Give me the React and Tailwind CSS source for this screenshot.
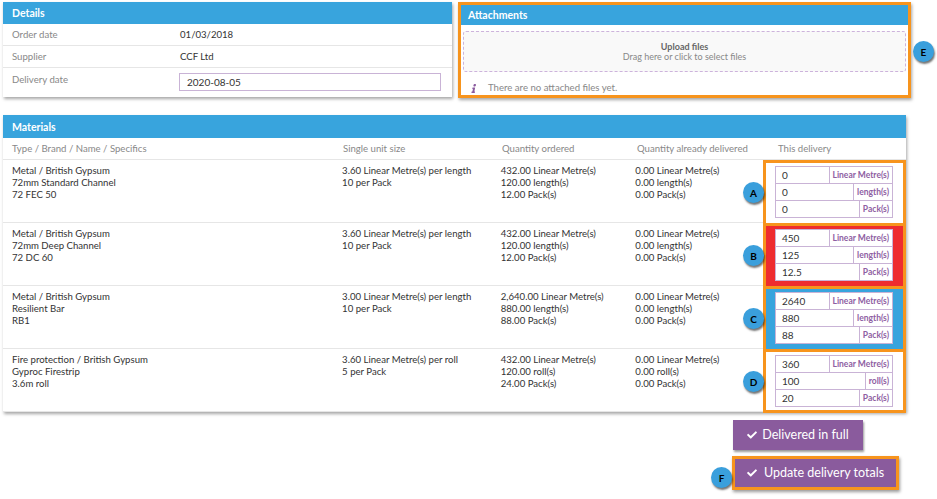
import React from 'react';
import { FaCheck, FaInfo } from 'react-icons/fa';

const FONT = 'font-["Lato","Open_Sans",sans-serif]';

const MATERIALS = [
  {
    name: ['Metal / British Gypsum', '72mm Standard Channel', '72 FEC 50'],
    size: ['3.60 Linear Metre(s) per length', '10 per Pack'],
    ordered: ['432.00 Linear Metre(s)', '120.00 length(s)', '12.00 Pack(s)'],
    delivered: ['0.00 Linear Metre(s)', '0.00 length(s)', '0.00 Pack(s)'],
    inputs: [['0', 'Linear Metre(s)'], ['0', 'length(s)'], ['0', 'Pack(s)']],
    badge: 'A',
    fill: 'bg-white',
  },
  {
    name: ['Metal / British Gypsum', '72mm Deep Channel', '72 DC 60'],
    size: ['3.60 Linear Metre(s) per length', '10 per Pack'],
    ordered: ['432.00 Linear Metre(s)', '120.00 length(s)', '12.00 Pack(s)'],
    delivered: ['0.00 Linear Metre(s)', '0.00 length(s)', '0.00 Pack(s)'],
    inputs: [['450', 'Linear Metre(s)'], ['125', 'length(s)'], ['12.5', 'Pack(s)']],
    badge: 'B',
    fill: 'bg-[#ee2c2f]',
  },
  {
    name: ['Metal / British Gypsum', 'Resilient Bar', 'RB1'],
    size: ['3.00 Linear Metre(s) per length', '10 per Pack'],
    ordered: ['2,640.00 Linear Metre(s)', '880.00 length(s)', '88.00 Pack(s)'],
    delivered: ['0.00 Linear Metre(s)', '0.00 length(s)', '0.00 Pack(s)'],
    inputs: [['2640', 'Linear Metre(s)'], ['880', 'length(s)'], ['88', 'Pack(s)']],
    badge: 'C',
    fill: 'bg-[#38a4dd]',
  },
  {
    name: ['Fire protection / British Gypsum', 'Gyproc Firestrip', '3.6m roll'],
    size: ['3.60 Linear Metre(s) per roll', '5 per Pack'],
    ordered: ['432.00 Linear Metre(s)', '120.00 roll(s)', '24.00 Pack(s)'],
    delivered: ['0.00 Linear Metre(s)', '0.00 roll(s)', '0.00 Pack(s)'],
    inputs: [['360', 'Linear Metre(s)'], ['100', 'roll(s)'], ['20', 'Pack(s)']],
    badge: 'D',
    fill: 'bg-white',
  },
];

function Badge({ letter, className }) {
  return (
    <div className={`absolute w-[21px] h-[21px] rounded-full bg-[#3a9fdc] shadow-[1px_2px_2px_rgba(0,0,0,0.55)] flex items-center justify-center text-[10px] font-bold text-black ${className}`}>
      {letter}
    </div>
  );
}

function Lines({ items }) {
  return (
    <div className="flex flex-col">
      {items.map((t, i) => (
        <div key={i} className="whitespace-nowrap">{t}</div>
      ))}
    </div>
  );
}

export default function App() {
  return (
    <div className={`${FONT} w-[937px] h-[499px] bg-white text-[#333] text-[9.6px] leading-[12px] overflow-hidden`}>
      <div className="flex items-start pt-[2px] pl-[3px]">
        {/* Details */}
        <div className="w-[449px] h-[95px] bg-white shadow-[1px_2px_3px_rgba(0,0,0,0.35)]">
          <div className="h-[22px] bg-[#38a4dd] px-[9px] flex items-center text-[10.5px] font-bold text-white">Details</div>
          <div className="h-[22px] flex items-center border-b border-[#e6e6e6] px-[9px] pt-[1px]">
            <div className="w-[168px] text-[#888]">Order date</div>
            <div>01/03/2018</div>
          </div>
          <div className="h-[22px] flex items-center border-b border-[#e6e6e6] px-[9px] pt-[1px]">
            <div className="w-[168px] text-[#888]">Supplier</div>
            <div>CCF Ltd</div>
          </div>
          <div className="flex items-start px-[9px] pt-[5px]">
            <div className="w-[167px] text-[#888] pt-[1px]">Delivery date</div>
            <div className="w-[262px] h-[18px] border border-[#c9b3d6] flex items-center px-[7px] text-[10px]">2020-08-05</div>
          </div>
        </div>

        {/* Attachments */}
        <div className="relative ml-[6px] w-[453px] h-[96px] border-[3px] border-[#f7941d] shadow-[1px_2px_3px_rgba(0,0,0,0.35)]">
          <div className="h-full bg-white">
            <div className="h-[20px] bg-[#38a4dd] px-[7px] flex items-center text-[10.5px] font-bold text-white">Attachments</div>
            <div className="mx-[2px] mt-[6px] h-[41px] border border-dashed border-[#cdb3dc] rounded-[3px] bg-[#f9f9f9] flex flex-col items-center justify-center text-[9px] leading-[10px]">
              <div className="font-bold text-[#666]">Upload files</div>
              <div className="text-[#888]">Drag here or click to select files</div>
            </div>
            <div className="flex items-center mt-[10px] pl-[9px] text-[#888]">
              <FaInfo className="w-[8px] h-[9px] text-[#8b5a9e] mr-[10px] -skew-x-12" />
              There are no attached files yet.
            </div>
          </div>
          <Badge letter="E" className="-right-[26px] top-[36px]" />
        </div>
      </div>

      {/* Materials */}
      <div className="ml-[3px] mt-[17px] w-[903px] bg-white shadow-[1px_2px_3px_rgba(0,0,0,0.35)]">
        <div className="h-[23px] bg-[#38a4dd] px-[9px] flex items-center text-[10.5px] font-bold text-white">Materials</div>
        <div className="flex h-[22px] items-center border-b border-[#e6e6e6] text-[#888]">
          <div className="w-[331px] pl-[9px]">Type / Brand / Name / Specifics</div>
          <div className="w-[159px] pl-[9px]">Single unit size</div>
          <div className="w-[135px] pl-[9px]">Quantity ordered</div>
          <div className="w-[137px] pl-[9px]">Quantity already delivered</div>
          <div className="pl-[13px]">This delivery</div>
        </div>
        {MATERIALS.map((m, idx) => (
          <div key={m.badge} className="flex h-[63px] border-b border-[#e6e6e6]">
            <div className="w-[331px] pl-[9px] pt-[5px]"><Lines items={m.name} /></div>
            <div className="w-[159px] pl-[9px] pt-[5px]"><Lines items={m.size} /></div>
            <div className="w-[135px] pl-[9px] pt-[5px]"><Lines items={m.ordered} /></div>
            <div className="w-[137px] pl-[9px] pt-[5px]"><Lines items={m.delivered} /></div>
            <div className={`relative shrink-0 w-[143px] h-[64px] border-x-[3px] border-t-[3px] border-[#f7941d] ${idx === MATERIALS.length - 1 ? 'border-b-[3px]' : '-mb-[1px]'} ${m.fill} pl-[9px] pr-[10px] pt-[3px]`}>
              {m.inputs.map(([val, unit], i) => (
                <div key={i} className={`flex h-[18px] bg-white border border-[#c9b3d6] ${i > 0 ? '-mt-[1px]' : ''}`}>
                  <div className="flex-1 flex items-center pl-[6px] text-[10px]">{val}</div>
                  <div className="flex items-center px-[3px] border-l border-[#c9b3d6] text-[8.5px] font-bold text-[#8e5ea2]">{unit}</div>
                </div>
              ))}
              <Badge letter={m.badge} className="-left-[23px] top-[19px]" />
            </div>
          </div>
        ))}
      </div>

      {/* Actions */}
      <div className="flex flex-col items-start ml-[733px] mt-[8px]">
        <button className="w-[130px] h-[30px] bg-[#8a5b9d] shadow-[1px_2px_2px_rgba(0,0,0,0.4)] text-white text-[12.5px] flex items-center justify-center gap-[5px]">
          <FaCheck className="w-[10px] h-[10px]" />
          Delivered in full
        </button>
        <div className="relative -ml-[1px] mt-[6px] border-[3px] border-[#f7941d] shadow-[1px_2px_3px_rgba(0,0,0,0.4)]">
          <button className="w-[161px] h-[28px] bg-[#8a5b9d] text-white text-[12.5px] flex items-center justify-center gap-[7px]">
            <FaCheck className="w-[10px] h-[10px]" />
            Update delivery totals
          </button>
          <Badge letter="F" className="-left-[24px] top-[8px]" />
        </div>
      </div>
    </div>
  );
}
